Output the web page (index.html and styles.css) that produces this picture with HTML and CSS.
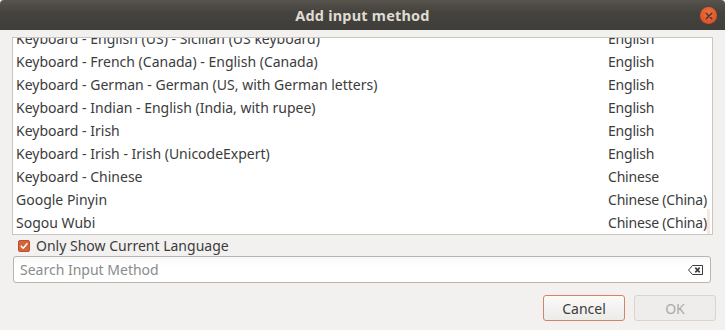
FILE: index.html
```html
<!DOCTYPE html>
<html>
<head>
<meta charset="utf-8">
<link rel="stylesheet" href="styles.css">
</head>
<body>
<div class="window">
  <div class="titlebar">
    <span class="title">Add input method</span>
    <span class="close">
      <svg width="16" height="16" viewBox="0 0 16 16"><path d="M5.2 5.2 L10.8 10.8 M10.8 5.2 L5.2 10.8" stroke="#3c3b37" stroke-width="1.4" stroke-linecap="round"/></svg>
    </span>
  </div>
  <div class="content">
    <div class="list">
      <div class="rows">
        <div class="row"><span class="name">Keyboard - English (US) - Sicilian (US keyboard)</span><span class="lang">English</span></div>
        <div class="row"><span class="name">Keyboard - French (Canada) - English (Canada)</span><span class="lang">English</span></div>
        <div class="row"><span class="name">Keyboard - German - German (US, with German letters)</span><span class="lang">English</span></div>
        <div class="row"><span class="name">Keyboard - Indian - English (India, with rupee)</span><span class="lang">English</span></div>
        <div class="row"><span class="name">Keyboard - Irish</span><span class="lang">English</span></div>
        <div class="row"><span class="name">Keyboard - Irish - Irish (UnicodeExpert)</span><span class="lang">English</span></div>
        <div class="row"><span class="name">Keyboard - Chinese</span><span class="lang">Chinese</span></div>
        <div class="row"><span class="name">Google Pinyin</span><span class="lang">Chinese (China)</span></div>
        <div class="row"><span class="name">Sogou Wubi</span><span class="lang">Chinese (China)</span></div>
      </div>
      <div class="scroll-ind"></div>
    </div>
    <label class="check-row">
      <span class="checkbox">
        <svg width="12" height="12" viewBox="0 0 12 12"><path d="M2.6 6.2 L5 8.6 L9.6 3.4" fill="none" stroke="#ffffff" stroke-width="1.8" stroke-linecap="round" stroke-linejoin="round"/></svg>
      </span>
      <span class="check-label">Only Show Current Language</span>
    </label>
    <div class="search">
      <span class="placeholder">Search Input Method</span>
      <svg class="clear" width="15" height="10" viewBox="0 0 15 10"><path d="M4.5 0.5 H14.5 V9.5 H4.5 L0.5 5 Z" fill="none" stroke="#3c3c3c" stroke-width="1"/><path d="M7.3 2.6 L11.7 7.4 M11.7 2.6 L7.3 7.4" stroke="#3c3c3c" stroke-width="1.6"/></svg>
    </div>
    <div class="buttons">
      <button class="btn cancel">Cancel</button>
      <button class="btn ok" disabled>OK</button>
    </div>
  </div>
</div>
</body>
</html>
```
FILE: styles.css
```css
* { box-sizing: border-box; }
html, body { margin: 0; padding: 0; }
body {
  width: 725px;
  height: 330px;
  overflow: hidden;
  background: #f2f1f0;
  font-family: "Noto Sans", "Open Sans", sans-serif;
  font-size: 14px;
  color: #3c3c3c;
}
.window {
  width: 725px;
  height: 330px;
  display: flex;
  flex-direction: column;
  background: #f2f1f0;
}
.titlebar {
  height: 30px;
  flex: none;
  background: linear-gradient(#57544e, #45433e 40%, #3f3e3a);
  border-radius: 4px 4px 0 0;
  display: flex;
  align-items: center;
  justify-content: center;
  position: relative;
}
.title {
  color: #dfdbd2;
  font-weight: bold;
  font-size: 14.5px;
  letter-spacing: 0.2px;
}
.close {
  position: absolute;
  right: 8px;
  top: 7px;
  width: 17px;
  height: 17px;
  border-radius: 50%;
  background: radial-gradient(circle at 50% 35%, #f07040, #df5426 70%, #c9481f);
  display: flex;
  align-items: center;
  justify-content: center;
}
.content {
  flex: 1;
  padding: 7px 12px 0 12px;
  display: flex;
  flex-direction: column;
}
.list {
  height: 198px;
  width: 701px;
  border: 1px solid #c9c5c0;
  background: #ffffff;
  overflow: hidden;
  position: relative;
}
.rows {
  margin-top: -11px;
}
.row {
  height: 23px;
  display: flex;
  align-items: center;
  padding-left: 3px;
  white-space: nowrap;
}
.name {
  width: 592px;
  flex: none;
}
.lang {
  flex: none;
  letter-spacing: -0.2px;
}
.scroll-ind {
  position: absolute;
  right: 2px;
  bottom: 0;
  width: 3px;
  height: 25px;
  background: #fbe6de;
}
.check-row {
  height: 21px;
  display: flex;
  align-items: center;
  padding-left: 6px;
  gap: 6px;
}
.checkbox {
  width: 12px;
  height: 12px;
  border-radius: 2px;
  background: #d6643b;
  border: 1px solid #b8542f;
  display: flex;
  align-items: center;
  justify-content: center;
}
.check-label {
  color: #3c3c3c;
}
.search {
  margin-left: 1px;
  width: 698px;
  height: 27px;
  border: 1px solid #b9b5ad;
  border-radius: 3px;
  background: linear-gradient(#f8f8f8, #ffffff 40%);
  display: flex;
  align-items: center;
  justify-content: space-between;
  padding: 0 7px 0 6px;
}
.placeholder {
  color: #8b8b8b;
}
.clear {
  display: block;
}
.buttons {
  display: flex;
  justify-content: flex-end;
  gap: 9px;
  margin-top: 12px;
  margin-right: -3px;
}
.btn {
  width: 82px;
  height: 26px;
  border-radius: 3px;
  font-family: "Noto Sans", "Open Sans", sans-serif;
  font-size: 14px;
  padding: 0;
}
.cancel {
  border: 1px solid #d4836a;
  background: linear-gradient(#fbfaf9, #ecebe8);
  color: #3c3c3c;
}
.ok {
  border: 1px solid #d8d4cf;
  background: #eeedeb;
  color: #a9a9a9;
}
```
